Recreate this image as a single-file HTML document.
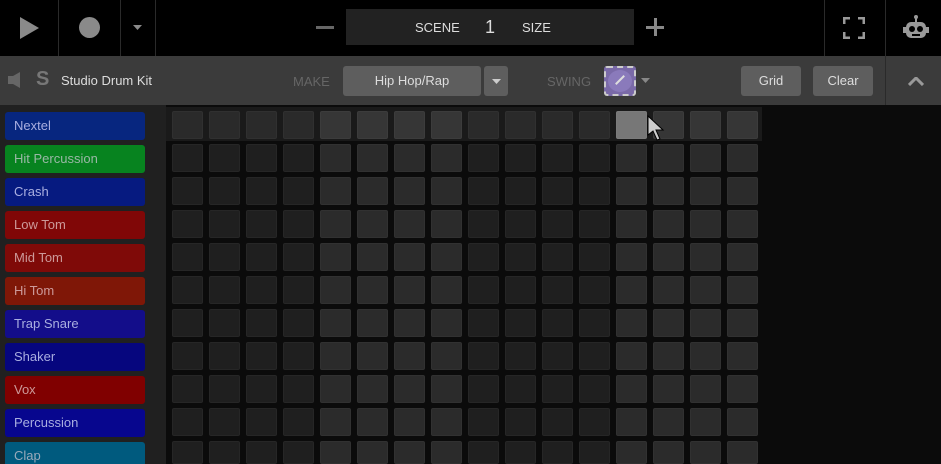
<!DOCTYPE html>
<html style="width:941px;height:464px;overflow:hidden"><head><style>
*{margin:0;padding:0;box-sizing:border-box}
body{width:941px;height:464px;overflow:hidden;background:#0b0b0b;font-family:"Liberation Sans",sans-serif;position:relative}
.abs{position:absolute}
#top{left:0;top:0;width:941px;height:56px;background:#000}
.vd{position:absolute;top:0;width:1px;height:56px;background:#2a2a2a}
#tb{left:0;top:56px;width:941px;height:49px;background:#3b3b3b}
.btn{position:absolute;background:#5e5e5e;border-radius:3px;color:#ddd;font-size:13px;text-align:center}
#side{left:0;top:105px;width:166px;height:359px;background:#202020}
.lb{position:absolute;left:5px;width:140px;height:28px;border-radius:3px;color:#a9aee0;font-size:13px;line-height:28px;padding-left:9px}
.pad{position:absolute;width:31px;height:28px;border-radius:2px}
#wrap{position:absolute;left:0;top:0;width:941px;height:464px;overflow:hidden}
</style></head><body><div id="wrap">
<div id="top" class="abs">
 <svg class="abs" style="left:20px;top:17px" width="20" height="22"><polygon points="0,0 19,11 0,22" fill="#8a8a8a"/></svg>
 <div class="vd" style="left:58px"></div>
 <div class="abs" style="left:79px;top:17px;width:21px;height:21px;border-radius:50%;background:#8a8a8a"></div>
 <div class="vd" style="left:120px"></div>
 <svg class="abs" style="left:133px;top:25px" width="9" height="5"><polygon points="0,0 9,0 4.5,5" fill="#8a8a8a"/></svg>
 <div class="vd" style="left:155px"></div>
 <div class="abs" style="left:316px;top:26px;width:18px;height:3px;background:#666"></div>
 <div class="abs" style="left:346px;top:9px;width:288px;height:36px;background:#222"></div>
 <div class="abs" style="left:415px;top:20px;color:#ddd;font-size:13px">SCENE</div>
 <div class="abs" style="left:485px;top:17px;color:#ddd;font-size:18px">1</div>
 <div class="abs" style="left:522px;top:20px;color:#ddd;font-size:13px">SIZE</div>
 <div class="abs" style="left:646px;top:26px;width:18px;height:3px;background:#888"></div>
 <div class="abs" style="left:654px;top:18px;width:3px;height:18px;background:#888"></div>
 <div class="vd" style="left:824px"></div>
 <svg class="abs" style="left:843px;top:17px" width="22" height="22" fill="none" stroke="#999" stroke-width="3"><path d="M1 7V1H7M15 1H21V7M21 15V21H15M7 21H1V15"/></svg>
 <div class="vd" style="left:885px"></div>
 <svg class="abs" style="left:902px;top:14px" width="28" height="28"><circle cx="14" cy="3" r="2" fill="#999"/><rect x="13" y="3" width="2" height="5" fill="#999"/><rect x="4" y="8" width="20" height="16" rx="5" fill="#999"/><rect x="1" y="13" width="3" height="6" fill="#999"/><rect x="24" y="13" width="3" height="6" fill="#999"/><circle cx="10" cy="15" r="3" fill="#000"/><circle cx="18" cy="15" r="3" fill="#000"/><rect x="10" y="20" width="8" height="2" fill="#000"/></svg>
</div>
<div id="tb" class="abs">
 <svg class="abs" style="left:8px;top:16px" width="14" height="16"><polygon points="0,4 5,4 12,0 12,16 5,12 0,12" fill="#666"/></svg>
 <div class="abs" style="left:36px;top:12px;color:#777;font-size:20px;font-weight:bold">S</div>
 <div class="abs" style="left:61px;top:17px;color:#ddd;font-size:13px">Studio Drum Kit</div>
 <div class="abs" style="left:293px;top:18px;color:#666;font-size:13px">MAKE</div>
 <div class="btn" style="left:343px;top:10px;width:138px;height:30px;line-height:30px">Hip Hop/Rap</div>
 <div class="btn" style="left:484px;top:10px;width:24px;height:30px"><svg style="margin-top:13px" width="9" height="5"><polygon points="0,0 9,0 4.5,5" fill="#ccc"/></svg></div>
 <div class="abs" style="left:547px;top:18px;color:#666;font-size:13px">SWING</div>
 <div class="abs" style="left:604px;top:10px;width:32px;height:30px;border:2px dashed #ccc;border-radius:3px;background:#7a6aa8"></div>
 <div class="abs" style="left:608px;top:14px;width:24px;height:22px;border-radius:50%;background:#8a7abb"></div>
 <div class="abs" style="left:619px;top:18px;width:2px;height:12px;background:#ddd;transform:rotate(45deg)"></div>
 <svg class="abs" style="left:641px;top:22px" width="9" height="5"><polygon points="0,0 9,0 4.5,5" fill="#888"/></svg>
 <div class="btn" style="left:741px;top:10px;width:60px;height:30px;line-height:30px">Grid</div>
 <div class="btn" style="left:813px;top:10px;width:60px;height:30px;line-height:30px">Clear</div>
 <div class="abs" style="left:885px;top:0;width:1px;height:49px;background:#2a2a2a"></div>
 <svg class="abs" style="left:908px;top:21px" width="16" height="9" fill="none" stroke="#999" stroke-width="3"><path d="M1 8L8 1L15 8"/></svg>
</div>
<div id="side" class="abs">
 <div class="lb" style="top:7px;background:#07267f">Nextel</div>
 <div class="lb" style="top:40px;background:#07831f;color:#9ab8a6">Hit Percussion</div>
 <div class="lb" style="top:73px;background:#061a80">Crash</div>
 <div class="lb" style="top:106px;background:#800707;color:#c99">Low Tom</div>
 <div class="lb" style="top:139px;background:#7f0a08;color:#c99">Mid Tom</div>
 <div class="lb" style="top:172px;background:#7f1707;color:#c99">Hi Tom</div>
 <div class="lb" style="top:205px;background:#130d8a">Trap Snare</div>
 <div class="lb" style="top:238px;background:#06067e">Shaker</div>
 <div class="lb" style="top:271px;background:#800000;color:#c99">Vox</div>
 <div class="lb" style="top:304px;background:#07068e">Percussion</div>
 <div class="lb" style="top:337px;background:#005a7e;color:#9ab">Clap</div>
</div>
<div class="abs" style="left:166px;top:107px;width:596px;height:34px;background:#1a1a1a"></div>
<div id="grid"></div>
<svg class="abs" style="left:647px;top:115px" width="20" height="28"><polygon points="1,1 1,20 6,16 10,25 13,24 9,15 16,15" fill="#ccc" stroke="#000" stroke-width="1"/></svg>
</div>
<script>
var g=document.getElementById('grid'),h='';
for(var r=0;r<11;r++)for(var c=0;c<16;c++){
 var light=Math.floor(c/4)%2==1;
 var col=r==0?(light?'#363636':'#2a2a2a'):(light?'#2b2b2b':'#1f1f1f');
 if(r==0&&c==12)col='#777';
 var t=111+r*33, hh=Math.min(28,464-t);
 h+='<div class="pad" style="left:'+(172+c*37)+'px;top:'+t+'px;height:'+hh+'px;background:'+col+';box-shadow:inset 0 0 0 1px rgba(255,255,255,0.03)"></div>';
}
g.innerHTML=h;
</script>
</body></html>
